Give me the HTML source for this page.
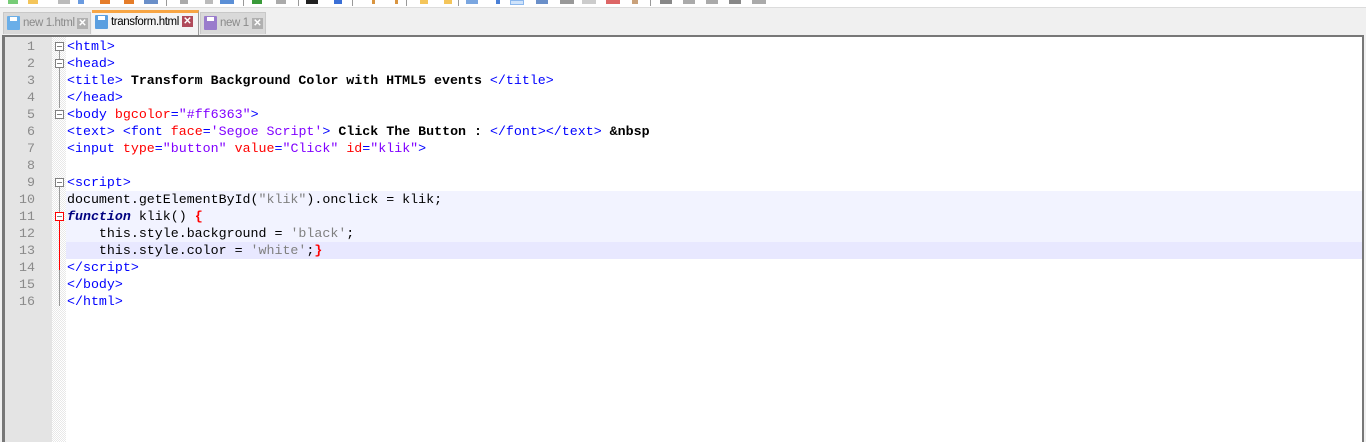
<!DOCTYPE html>
<html><head><meta charset="utf-8"><style>
*{margin:0;padding:0;box-sizing:border-box}
body{width:1366px;height:442px;background:#f0f0f0;position:relative;overflow:hidden;font-family:"Liberation Sans",sans-serif}
.tb{position:absolute;left:0;top:0;width:1366px;height:8px;background:#fff;border-bottom:1px solid #dcdcdc}
.ic{position:absolute;top:0;height:4px}
.sep{position:absolute;top:0;width:1px;height:6px;background:#999}
.tab{position:absolute;font-size:11.5px;letter-spacing:-0.4px;color:#8a8a8a;padding-left:19px;line-height:20px;white-space:nowrap}
.fl{position:absolute;left:3px;top:3px;width:13px;height:14px;border-radius:1px}
.fl::after{content:"";position:absolute;left:3px;top:1px;width:7px;height:4px;background:#fff}
.x{position:absolute;top:5px;width:11px;height:11px;background:#b0b0b0;color:#fff;font-size:10px;line-height:11px;text-align:center;font-weight:bold;letter-spacing:0}
.ed{position:absolute;left:2px;top:35px;width:1362px;height:407px;background:#fff;border-left:3px solid #777;border-top:2px solid #777;border-right:2px solid #777}
.ln{position:absolute;left:0;top:0;width:47px;height:100%;background:#e4e4e4}
.fold{position:absolute;left:47px;top:0;width:14px;height:100%;background-color:#fff;background-image:linear-gradient(45deg,#e8e8e8 25%,transparent 25%,transparent 75%,#e8e8e8 75%),linear-gradient(45deg,#e8e8e8 25%,transparent 25%,transparent 75%,#e8e8e8 75%);background-size:2px 2px;background-position:0 0,1px 1px}
.row{position:absolute;left:0;width:1357px;height:17px;font-family:"Liberation Mono",monospace;font-size:13.3px;line-height:17px;white-space:pre}
.num{position:absolute;left:0;width:30px;text-align:right;color:#8a8a8a}
.code{position:absolute;left:62px}
.hl{position:absolute;left:61px;right:0;top:0;height:17px;background:#f2f3ff}
.t{color:#0000ff}.a{color:#ff0000}.v{color:#8000ff}.b{font-weight:bold;color:#000}.s{color:#808080}
.kw{font-weight:bold;font-style:italic;color:#000080}.br{color:#ff0000;font-weight:bold}
.box{position:absolute;left:50px;width:9px;height:9px;border:1px solid #808080;background:#fff}
.box::after{content:"";position:absolute;left:1px;top:3px;width:5px;height:1px;background:#808080}
.vl{position:absolute;left:54px;width:1px;background:#999}
</style></head><body>
<div class="tb">
<div class="ic" style="left:8px;width:10px;background:#7c7"></div>
<div class="ic" style="left:28px;width:10px;background:#f4c55a"></div>
<div class="ic" style="left:58px;width:12px;background:#bbb"></div>
<div class="ic" style="left:78px;width:6px;background:#6a9be0"></div>
<div class="ic" style="left:100px;width:10px;background:#e57d2a"></div>
<div class="ic" style="left:124px;width:10px;background:#e57d2a"></div>
<div class="ic" style="left:144px;width:14px;background:#6a8fc9"></div>
<div class="sep" style="left:166px"></div>
<div class="ic" style="left:180px;width:8px;background:#aaa"></div>
<div class="ic" style="left:205px;width:8px;background:#bbb"></div>
<div class="ic" style="left:220px;width:14px;background:#5b8fd6"></div>
<div class="sep" style="left:243px"></div>
<div class="ic" style="left:252px;width:10px;background:#3a9a3a"></div>
<div class="ic" style="left:276px;width:10px;background:#aaa"></div>
<div class="sep" style="left:298px"></div>
<div class="ic" style="left:306px;width:12px;background:#222"></div>
<div class="ic" style="left:334px;width:8px;background:#3a6fd6"></div>
<div class="sep" style="left:352px"></div>
<div class="ic" style="left:372px;width:3px;background:#d99540"></div>
<div class="ic" style="left:395px;width:3px;background:#d99540"></div>
<div class="sep" style="left:406px"></div>
<div class="ic" style="left:420px;width:8px;background:#f4c55a"></div>
<div class="ic" style="left:444px;width:8px;background:#f4c55a"></div>
<div class="sep" style="left:458px"></div>
<div class="ic" style="left:466px;width:12px;background:#7aa6e0"></div>
<div class="ic" style="left:496px;width:4px;background:#4a7fd6"></div>
<div class="ic" style="left:510px;width:14px;height:5px;background:#cfe3fb;border:1px solid #8cb8ee"></div>
<div class="ic" style="left:536px;width:12px;background:#6a8fc9"></div>
<div class="ic" style="left:560px;width:14px;background:#999"></div>
<div class="ic" style="left:582px;width:14px;background:#ccc"></div>
<div class="ic" style="left:606px;width:14px;background:#d66"></div>
<div class="ic" style="left:632px;width:6px;background:#c9a17a"></div>
<div class="sep" style="left:650px"></div>
<div class="ic" style="left:660px;width:12px;background:#888"></div>
<div class="ic" style="left:683px;width:12px;background:#aaa"></div>
<div class="ic" style="left:706px;width:12px;background:#aaa"></div>
<div class="ic" style="left:729px;width:12px;background:#888"></div>
<div class="ic" style="left:752px;width:14px;background:#aaa"></div>
</div>

<div class="tab" style="left:3px;top:12px;width:88px;height:22px;background:#d9d9d9;border:1px solid #c8c8c8;border-bottom:none">
<div class="fl" style="background:#6aaee8"></div>new 1.html<div class="x" style="left:73px">✕</div></div>
<div class="tab" style="left:92px;top:10px;width:107px;height:25px;background:#f4f4f4;border-top:3px solid #f7a543;border-right:1px solid #999;color:#000;line-height:19px">
<div class="fl" style="background:#5b9fe0;top:2px"></div>transform.html<div class="x" style="left:90px;top:3px;background:#b04a5a">✕</div></div>
<div class="tab" style="left:200px;top:12px;width:66px;height:22px;background:#d9d9d9;border:1px solid #c8c8c8;border-bottom:none">
<div class="fl" style="background:#9a7ccc"></div>new 1<div class="x" style="left:51px">✕</div></div>

<div class="ed">
<div class="ln"></div><div class="fold"></div>
<div class="vl" style="top:13px;height:58px"></div>
<div class="vl" style="top:149px;height:120px"></div>
<div class="vl" style="top:183px;height:50px;background:#f00"></div>

<div class="row" style="top:1px"><span class="num">1</span><span class="code"><span class="t">&lt;html&gt;</span></span></div>
<div class="box" style="top:5px"></div>
<div class="row" style="top:18px"><span class="num">2</span><span class="code"><span class="t">&lt;head&gt;</span></span></div>
<div class="box" style="top:22px"></div>
<div class="row" style="top:35px"><span class="num">3</span><span class="code"><span class="t">&lt;title&gt;</span><span class="b"> Transform Background Color with HTML5 events </span><span class="t">&lt;/title&gt;</span></span></div>
<div class="row" style="top:52px"><span class="num">4</span><span class="code"><span class="t">&lt;/head&gt;</span></span></div>
<div class="row" style="top:69px"><span class="num">5</span><span class="code"><span class="t">&lt;body </span><span class="a">bgcolor</span><span class="t">=</span><span class="v">"#ff6363"</span><span class="t">&gt;</span></span></div>
<div class="box" style="top:73px"></div>
<div class="row" style="top:86px"><span class="num">6</span><span class="code"><span class="t">&lt;text&gt;</span> <span class="t">&lt;font </span><span class="a">face</span><span class="t">=</span><span class="v">'Segoe Script'</span><span class="t">&gt;</span><span class="b"> Click The Button : </span><span class="t">&lt;/font&gt;&lt;/text&gt;</span><span class="b"> &amp;nbsp</span></span></div>
<div class="row" style="top:103px"><span class="num">7</span><span class="code"><span class="t">&lt;input </span><span class="a">type</span><span class="t">=</span><span class="v">"button"</span><span class="t"> </span><span class="a">value</span><span class="t">=</span><span class="v">"Click"</span><span class="t"> </span><span class="a">id</span><span class="t">=</span><span class="v">"klik"</span><span class="t">&gt;</span></span></div>
<div class="row" style="top:120px"><span class="num">8</span></div>
<div class="row" style="top:137px"><span class="num">9</span><span class="code"><span class="t">&lt;script&gt;</span></span></div>
<div class="box" style="top:141px"></div>
<div class="row" style="top:154px"><div class="hl"></div><span class="num">10</span><span class="code">document.getElementById(<span class="s">"klik"</span>).onclick = klik;</span></div>
<div class="row" style="top:171px"><div class="hl"></div><span class="num">11</span><span class="code"><span class="kw">function</span> klik() <span class="br">{</span></span></div>
<div class="box" style="top:175px;border-color:#f00"></div>
<div class="row" style="top:188px"><div class="hl"></div><span class="num">12</span><span class="code">    this.style.background = <span class="s">'black'</span>;</span></div>
<div class="row" style="top:205px"><div class="hl" style="background:#e8e8ff"></div><span class="num">13</span><span class="code">    this.style.color = <span class="s">'white'</span>;<span class="br">}</span></span></div>
<div class="row" style="top:222px"><span class="num">14</span><span class="code"><span class="t">&lt;/script&gt;</span></span></div>
<div class="row" style="top:239px"><span class="num">15</span><span class="code"><span class="t">&lt;/body&gt;</span></span></div>
<div class="row" style="top:256px"><span class="num">16</span><span class="code"><span class="t">&lt;/html&gt;</span></span></div>
</div>
</body></html>
